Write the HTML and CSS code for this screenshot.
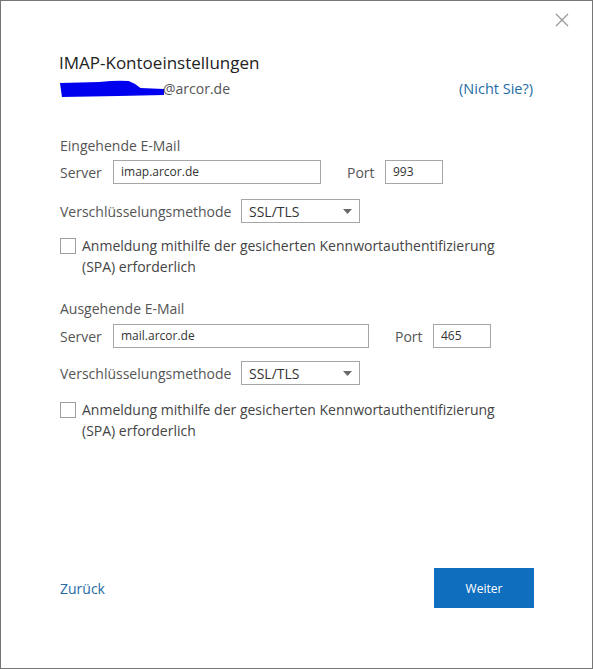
FILE: index.html
```html
<!DOCTYPE html>
<html lang="de">
<head>
<meta charset="utf-8">
<title>IMAP-Kontoeinstellungen</title>
<link rel="stylesheet" href="styles.css">
</head>
<body>
<div class="dialog">
  <button class="close" aria-label="Schließen">
    <svg width="14" height="14" viewBox="0 0 14 14"><path d="M1 1 L13 13 M13 1 L1 13" stroke="#9a9a9a" stroke-width="1.3" fill="none"/></svg>
  </button>
  <h1 class="title">IMAP-Kontoeinstellungen</h1>
  <div class="account">
    <span class="email"><svg class="redact" width="104" height="18" viewBox="0 0 106 18" preserveAspectRatio="none"><path d="M0 4 L40 3 Q58 1 70 2 Q76 4 82 9 L106 10 L106 16 L60 17 L2 18 Z" fill="#0000ee"/></svg>@arcor.de</span>
    <a class="link" href="#">(Nicht Sie?)</a>
  </div>

  <section class="group">
    <h2 class="heading">Eingehende E-Mail</h2>
    <div class="row row-server">
      <label class="lbl-server">Server</label>
      <div class="input in-server1">imap.arcor.de</div>
      <label class="lbl-port">Port</label>
      <div class="input in-port">993</div>
    </div>
    <div class="row row-enc">
      <label class="lbl-enc">Verschlüsselungsmethode</label>
      <div class="select"><span>SSL/TLS</span><svg width="9" height="5" viewBox="0 0 9 5"><path d="M0 0 L9 0 L4.5 5 Z" fill="#6a6a6a"/></svg></div>
    </div>
    <div class="check">
      <span class="box"></span>
      <span class="check-text">Anmeldung mithilfe der gesicherten Kennwortauthentifizierung<br>(SPA) erforderlich</span>
    </div>
  </section>

  <section class="group group2">
    <h2 class="heading">Ausgehende E-Mail</h2>
    <div class="row row-server">
      <label class="lbl-server">Server</label>
      <div class="input in-server2">mail.arcor.de</div>
      <label class="lbl-port">Port</label>
      <div class="input in-port">465</div>
    </div>
    <div class="row row-enc">
      <label class="lbl-enc">Verschlüsselungsmethode</label>
      <div class="select"><span>SSL/TLS</span><svg width="9" height="5" viewBox="0 0 9 5"><path d="M0 0 L9 0 L4.5 5 Z" fill="#6a6a6a"/></svg></div>
    </div>
    <div class="check">
      <span class="box"></span>
      <span class="check-text">Anmeldung mithilfe der gesicherten Kennwortauthentifizierung<br>(SPA) erforderlich</span>
    </div>
  </section>

  <div class="spacer"></div>
  <div class="footer">
    <a class="back" href="#">Zurück</a>
    <button class="next">Weiter</button>
  </div>
</div>
</body>
</html>
```

FILE: styles.css
```css
* { box-sizing: border-box; }
html, body { margin: 0; padding: 0; background: #fff; }
body {
  font-family: "Open Sans", "Noto Sans", sans-serif;
  color: #444;
}
.dialog {
  position: relative;
  width: 593px;
  height: 669px;
  border: 1px solid #767676;
  padding: 50px 58px 0 58px;
  display: flex;
  flex-direction: column;
}
.close {
  position: absolute;
  top: 11px;
  right: 22px;
  width: 16px;
  height: 16px;
  padding: 1px;
  border: 0;
  background: none;
}
.title {
  margin: 0;
  font-size: 17px;
  font-weight: 400;
  line-height: 24px;
  color: #222;
}
.account {
  display: flex;
  justify-content: space-between;
  align-items: center;
  height: 20px;
  margin-top: 3px;
  font-size: 14px;
}
.email { display: flex; align-items: center; color: #555; }
.redact { margin-left: 1px; margin-right: -1px; }
.link { color: #246ca6; text-decoration: none; font-size: 14.5px; margin-right: 1px; }
.group { margin-top: 38px; }
.group2 { margin-top: 22px; }
.heading {
  margin: 0 0 0 1px;
  font-size: 14px;
  font-weight: 400;
  line-height: 20px;
  color: #555;
}
.row {
  display: flex;
  align-items: center;
  margin-left: 1px;
  font-size: 14px;
  color: #555;
}
.row-server { margin-top: 4px; }
.group2 .row-server { margin-top: 5px; }
.row-enc { margin-top: 15px; }
.group2 .row-enc { margin-top: 13px; }
.lbl-server { width: 53px; }
.lbl-port { margin-left: 26px; width: 38px; }
.lbl-enc { width: 181px; }
.input {
  height: 24px;
  border: 1px solid #a6a6a6;
  padding: 0 7px;
  font-size: 12px;
  line-height: 22px;
  color: #333;
}
.in-server1 { width: 208px; }
.in-server2 { width: 256px; }
.in-port { width: 58px; }
.select {
  width: 119px;
  height: 24px;
  border: 1px solid #a6a6a6;
  display: flex;
  align-items: center;
  justify-content: space-between;
  padding: 0 7px 0 7px;
  font-size: 14px;
  color: #333;
}
.check {
  display: flex;
  align-items: flex-start;
  margin-top: 12px;
  margin-left: 1px;
  font-size: 14px;
  line-height: 21px;
  color: #444;
}
.group2 .check { margin-top: 14px; }
.box {
  width: 16px;
  height: 16px;
  border: 1px solid #a0a0a0;
  margin-top: 3px;
  margin-right: 6px;
  flex: none;
}
.spacer { flex: 1; }
.footer {
  display: flex;
  justify-content: space-between;
  align-items: center;
  margin-bottom: 60px;
}
.back { color: #246ca6; text-decoration: none; font-size: 14px; margin-left: 1px; }
.next {
  width: 100px;
  height: 40px;
  background: #106ebe;
  color: #fff;
  border: 0;
  font-family: inherit;
  font-size: 12px;
}
```
